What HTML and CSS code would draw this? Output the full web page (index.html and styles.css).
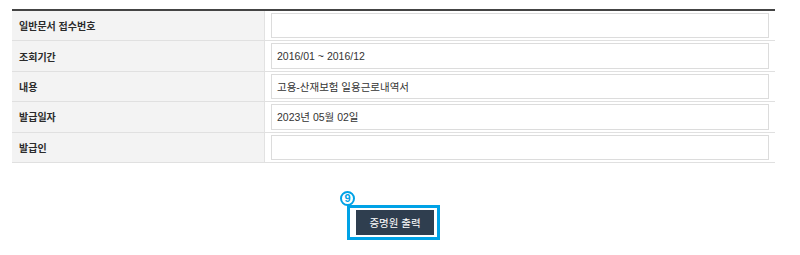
FILE: index.html
```html
<!DOCTYPE html>
<html lang="ko">
<head>
<meta charset="utf-8">
<title>증명원 출력</title>
<link rel="stylesheet" href="styles.css">
</head>
<body>
<div class="wrap">
  <div class="form">
    <div class="row">
      <div class="label">일반문서 접수번호</div>
      <div class="cell"><div class="field"></div></div>
    </div>
    <div class="row">
      <div class="label">조회기간</div>
      <div class="cell"><div class="field">2016/01 ~ 2016/12</div></div>
    </div>
    <div class="row">
      <div class="label">내용</div>
      <div class="cell"><div class="field">고용-산재보험 일용근로내역서</div></div>
    </div>
    <div class="row">
      <div class="label">발급일자</div>
      <div class="cell"><div class="field">2023년 05월 02일</div></div>
    </div>
    <div class="row">
      <div class="label">발급인</div>
      <div class="cell"><div class="field"></div></div>
    </div>
  </div>
  <div class="actions">
    <div class="highlight">
      <span class="badge">9</span>
      <button class="btn" type="button">증명원 출력</button>
    </div>
  </div>
</div>
</body>
</html>
```
FILE: styles.css
```css
html, body {
  margin: 0;
  padding: 0;
  background: #ffffff;
}
body {
  font-family: "Noto Sans CJK KR", "Noto Sans", sans-serif;
  font-size: 10px;
  color: #333333;
}
.wrap {
  width: 763px;
  padding: 9px 0 0 12px;
}
.form {
  border-top: 2px solid #444444;
}
.row {
  display: grid;
  grid-template-columns: 253px 1fr;
  height: 30.4px;
  border-bottom: 1px solid #e0e0e0;
  box-sizing: border-box;
}
.label {
  background: #f3f3f3;
  border-right: 1px solid #e2e2e2;
  font-weight: bold;
  color: #2b2b2b;
  padding-left: 7px;
  display: flex;
  align-items: center;
}
.cell {
  padding: 2px 6px;
  display: flex;
  align-items: stretch;
}
.field {
  flex: 1;
  border: 1px solid #dcdcdc;
  display: flex;
  align-items: center;
  padding-left: 5px;
  font-family: "Liberation Sans", "Noto Sans CJK KR", sans-serif;
  font-size: 10.5px;
  color: #333333;
}
.actions {
  display: flex;
  justify-content: center;
  padding-top: 42px;
}
.highlight {
  position: relative;
  border: 3px solid #00a2e6;
  padding: 2px 3px 2px 6px;
  display: flex;
}
.badge {
  position: absolute;
  left: -10px;
  top: -17px;
  width: 11px;
  height: 11px;
  border: 2px solid #00a2e6;
  border-radius: 50%;
  background: #ffffff;
  color: #00a2e6;
  font-family: "Liberation Sans", sans-serif;
  font-weight: bold;
  font-size: 11px;
  line-height: 11px;
  text-align: center;
}
.btn {
  width: 78px;
  height: 25px;
  border: none;
  margin: 0;
  padding: 0;
  background: #2f3e4f;
  color: #ffffff;
  font-family: "Noto Sans CJK KR", "Noto Sans", sans-serif;
  font-size: 10.5px;
}
```
